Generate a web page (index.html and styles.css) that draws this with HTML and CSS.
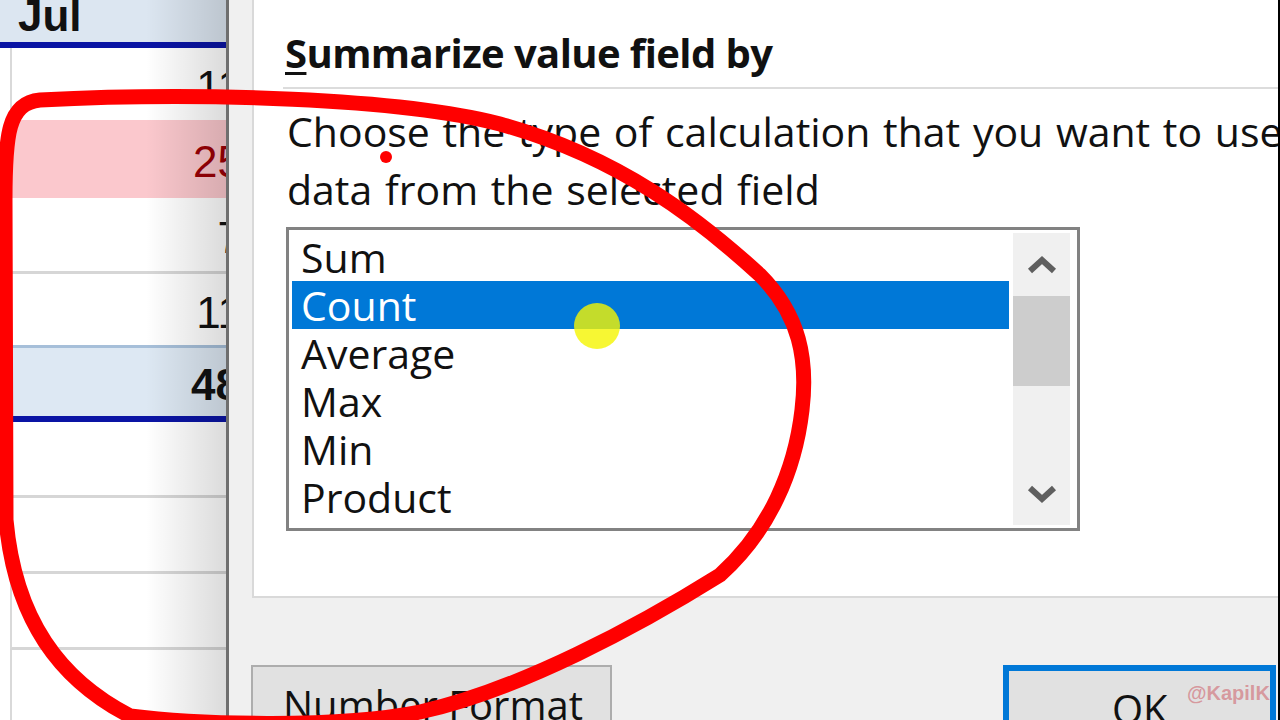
FILE: index.html
```html
<!DOCTYPE html>
<html lang="en">
  <head>
    <meta charset="UTF-8" />
    <meta name="viewport" content="width=device-width, initial-scale=1.0" />
    <title>Value Field Settings</title>
    <link rel="stylesheet" href="styles.css">
  </head>
  <body>
    <div class="screen">
      <div class="sheet">
        <div class="row head"><span class="head-text">Jul</span></div>
        <div class="row line-blue"></div>
        <div class="row cell-row"><span class="cell">11</span></div>
        <div class="row cell-row bad"><span class="cell">25</span></div>
        <div class="row cell-row grid"><span class="cell">7</span></div>
        <div class="row cell-row grid-blue"><span class="cell">11</span></div>
        <div class="row cell-row total"><span class="cell">48</span></div>
        <div class="row line-blue"></div>
        <div class="row cell-row grid"></div>
        <div class="row cell-row grid"></div>
        <div class="row cell-row grid"></div>
        <div class="row cell-row"></div>
      </div>

      <div class="dialog">
        <div class="panel">
          <h2 class="title"><u>S</u>ummarize value field by</h2>
          <div class="sep"></div>
          <p class="desc">Choose the type of calculation that you want to use to summarize<br />data from the selected field</p>

          <div class="listbox">
            <ul class="items">
              <li>Sum</li>
              <li class="selected">Count</li>
              <li>Average</li>
              <li>Max</li>
              <li>Min</li>
              <li>Product</li>
            </ul>
            <div class="scrollbar">
              <div class="arrow">
                <svg width="30" height="20" viewBox="0 0 30 20"><polyline points="3,16 15,5 27,16" fill="none" stroke="#5f5f5f" stroke-width="6" /></svg>
              </div>
              <div class="thumb"></div>
              <div class="track"></div>
              <div class="arrow">
                <svg width="30" height="20" viewBox="0 0 30 20"><polyline points="3,4 15,15 27,4" fill="none" stroke="#5f5f5f" stroke-width="6" /></svg>
              </div>
            </div>
          </div>
        </div>

        <div class="footer">
          <button class="btn">Number Format</button>
          <button class="btn btn-default">OK</button>
        </div>
      </div>

      <!-- pen annotations drawn over the recording -->
      <svg class="ink" width="1280" height="720" viewBox="0 0 1280 720">
        <path d="M 130 716 C 60 680, 15 620, 6 520 L 5 200 C 5 135, 8 103, 40 100 C 200 92, 400 98, 500 124 C 620 157, 700 220, 760 275 C 800 315, 808 360, 802 410 C 795 470, 770 530, 720 575 C 640 625, 520 690, 420 712 C 340 728, 200 725, 130 716 Z"
          fill="none" stroke="#ff0000" stroke-width="15" stroke-linejoin="round" />
        <circle cx="386" cy="157" r="6" fill="#ff0000" />
        <circle cx="597" cy="326" r="23" fill="rgba(245, 245, 0, 0.8)" />
      </svg>

      <span class="watermark">@KapilK</span>
    </div>
  </body>
</html>
```

FILE: styles.css
```css
body {
  margin: 0;
  overflow: hidden;
  font-family: "Open Sans", "Noto Sans", sans-serif;
}
.screen {
  position: relative;
  display: flex;
  width: 1280px;
  height: 720px;
  overflow: hidden;
  background-color: #fff;
}

/* spreadsheet behind the dialog */
.sheet {
  position: relative;
  width: 226px;
  flex-shrink: 0;
  overflow: hidden;
  border-right: 3px solid #6e6e6e;
  font-family: "Liberation Sans", Arial, sans-serif;
}
.sheet::after {
  content: "";
  position: absolute;
  top: 0;
  right: 0;
  bottom: 0;
  width: 80px;
  background: linear-gradient(to right, rgba(0, 0, 0, 0), rgba(0, 0, 0, 0.14));
}
.row {
  display: flex;
  align-items: center;
  width: 230px;
  border-left: 2px solid #d9d9d9;
  margin-left: 10px;
}
.head {
  height: 42px;
  margin-left: 0;
  padding-left: 18px;
  border-left: none;
  background-color: #dce6f1;
  box-sizing: border-box;
  width: 250px;
}
.head-text {
  font-size: 44px;
  font-weight: bold;
  line-height: 31px;
  align-self: flex-start;
  color: #111;
}
.line-blue {
  height: 6px;
  margin-left: 0;
  border-left: none;
  width: 250px;
  background-color: #0a14a4;
}
.cell-row {
  height: 72px;
  justify-content: flex-end;
  font-size: 44px;
  color: #111;
}
.bad {
  height: 78px;
  background-color: #fbc8cd;
  color: #9c0006;
}
.grid {
  height: 73px;
  border-bottom: 3px solid #d6d6d6;
}
.grid-blue {
  height: 71px;
  border-bottom: 3px solid #a6bfd9;
}
.total {
  height: 68px;
  margin-left: 0;
  border-left: none;
  width: 250px;
  padding-right: 10px;
  box-sizing: border-box;
  font-weight: bold;
  background-color: #dde8f3;
}
.cell {
  padding-top: 6px;
}

/* dialog */
.dialog {
  display: flex;
  flex-direction: column;
  flex: 1;
  min-width: 0;
  padding-left: 23px;
  background-color: #f0f0f0;
  border-right: 2px solid #000;
}
.panel {
  flex-shrink: 0;
  height: 596px;
  padding-left: 31px;
  overflow: hidden;
  background-color: #fff;
  border-left: 2px solid #d9d9d9;
  border-bottom: 2px solid #d9d9d9;
  color: #111;
}
.title {
  margin: 0;
  padding-top: 28px;
  font-size: 40px;
  font-weight: 700;
  line-height: 50px;
  letter-spacing: -0.6px;
  white-space: nowrap;
}
.title u {
  text-decoration-thickness: 3px;
  text-underline-offset: 4px;
}
.sep {
  height: 2px;
  margin-top: 9px;
  margin-left: -2px;
  background-color: #dcdcdc;
}
.desc {
  margin: 13px 0 0 2px;
  font-size: 41px;
  line-height: 58px;
  word-spacing: 2px;
  white-space: nowrap;
}
.listbox {
  display: flex;
  width: 788px;
  height: 298px;
  margin-top: 9px;
  margin-left: 1px;
  border: 3px solid #828282;
  background-color: #fff;
}
.items {
  flex: 1;
  margin: 3px 4px 0 3px;
  padding: 0;
  list-style: none;
  font-size: 41px;
}
.items li {
  height: 48px;
  padding-left: 9px;
  line-height: 48px;
}
.items li.selected {
  background-color: #0078d7;
  color: #fff;
}
.scrollbar {
  display: flex;
  flex-direction: column;
  width: 57px;
  margin: 3px 7px 3px 0;
  background-color: #f0f0f0;
}
.arrow {
  display: flex;
  align-items: center;
  justify-content: center;
  height: 63px;
}
.thumb {
  height: 90px;
  background-color: #cdcdcd;
}
.track {
  flex: 1;
}

/* buttons */
.footer {
  display: flex;
  flex-shrink: 0;
  justify-content: space-between;
  margin-top: 67px;
}
.btn {
  flex-shrink: 0;
  height: 70px;
  padding: 0 0 0 30px;
  text-align: left;
  font-family: "Open Sans", "Noto Sans", sans-serif;
  font-size: 40px;
  line-height: 76px;
  color: #111;
  background-color: #e1e1e1;
  border: 2px solid #adadad;
  box-sizing: border-box;
  width: 361px;
  margin-left: -1px;
}
.btn-default {
  width: 273px;
  margin: 0 2px 0 0;
  padding-left: 103px;
  border: 6px solid #0078d7;
}

/* overlays from the video */
.ink {
  position: absolute;
  top: 0;
  left: 0;
}
.watermark {
  position: absolute;
  left: 1187px;
  top: 682px;
  font-family: "Liberation Sans", Arial, sans-serif;
  font-size: 20px;
  font-weight: bold;
  color: rgba(205, 90, 100, 0.55);
}
```
